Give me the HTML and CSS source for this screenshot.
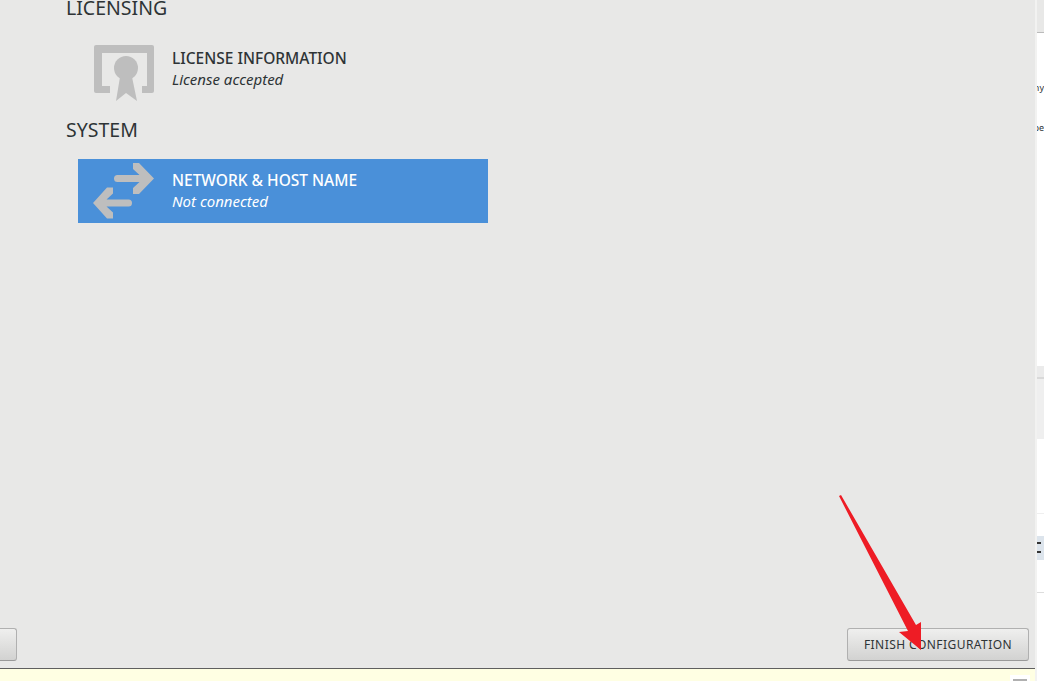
FILE: index.html
```html
<!DOCTYPE html>
<html lang="en">
<head>
  <meta charset="UTF-8">
  <title>Initial setup</title>
  <link rel="stylesheet" href="styles.css">
</head>
<body>
  <div class="screen">
    <div class="main">
      <div class="hub">
        <h2 class="category">LICENSING</h2>
        <div class="spoke">
          <svg class="spoke-icon" viewBox="0 0 66 64">
            <path d="M6 8H62a2 2 0 0 1 2 2V54a2 2 0 0 1-2 2H52V49H57V16H12V49H20V56H6a2 2 0 0 1-2-2V10a2 2 0 0 1 2-2z"/>
            <circle cx="36" cy="31" r="12"/>
            <polygon points="30,40 42,40 47,64 36,56 26,64"/>
          </svg>
          <div>
            <div class="spoke-title">LICENSE INFORMATION</div>
            <div class="spoke-status">License accepted</div>
          </div>
        </div>
        <h2 class="category">SYSTEM</h2>
        <div class="spoke selected">
          <svg class="spoke-icon" viewBox="0 0 66 64">
            <path d="M43 4h6L64 19.5 49 35H43V29L49.5 23H27.5a3.5 3.5 0 0 1 0-7H49.5L43 10z"/>
            <path d="M23 28.5H17L3 44 17 59.5H23V53.5L16.5 47.5H38.5a3.5 3.5 0 0 0 0-7H16.5L23 34.5z"/>
          </svg>
          <div>
            <div class="spoke-title">NETWORK &amp; HOST NAME</div>
            <div class="spoke-status">Not connected</div>
          </div>
        </div>
        <div class="actions">
          <button class="btn btn-cut"></button>
          <button class="btn">FINISH CONFIGURATION</button>
        </div>
      </div>
      <div class="notice"><span class="notice-box"><span class="notice-mark"></span></span></div>
    </div>
    <div class="side">
      <div class="side-head"></div>
      <div class="side-word word-any">any</div>
      <div class="side-word word-type">type</div>
      <div class="side-band"></div>
      <div class="side-rule"></div>
      <div class="side-code"><span></span><span></span></div>
      <div class="side-rule rule-last"></div>
    </div>
  </div>

  <svg class="arrow" viewBox="0 0 1044 681">
    <polygon points="839,496 841,495 916,625 921,622 921,650 899,632 908,631"/>
  </svg>
</body>
</html>
```

FILE: styles.css
```css
* {
  box-sizing: border-box;
}
html, body {
  margin: 0;
  height: 100%;
}
body {
  position: relative;
  width: 1044px;
  height: 681px;
  overflow: hidden;
  background: #fff;
  font-family: "Noto Sans", sans-serif;
  color: #2e3436;
}
.screen {
  display: flex;
  height: 681px;
}
.main {
  width: 1035px;
  display: flex;
  flex-direction: column;
}
.hub {
  flex: 1;
  display: flex;
  flex-direction: column;
  background: #e8e8e7;
  border-bottom: 1px solid #5f5f5f;
  margin-top: -2px;
}
.category {
  margin: 0 0 19px 66px;
  height: 20px;
  line-height: 20px;
  font-size: 19.5px;
  font-weight: 400;
}
.spoke {
  display: flex;
  align-items: center;
  gap: 16px;
  width: 410px;
  height: 64px;
  margin: 0 0 19px 78px;
  padding-left: 12px;
}
.spoke-icon {
  width: 66px;
  height: 64px;
  fill: #bebebe;
  flex: none;
}
.spoke-title {
  font-size: 15.5px;
  line-height: 21px;
  font-weight: 500;
}
.spoke-status {
  font-size: 15px;
  line-height: 21px;
  font-style: italic;
}
.selected {
  background: #4a90d9;
  color: #fff;
}
.actions {
  margin-top: auto;
  display: flex;
  justify-content: space-between;
  padding-right: 6px;
  margin-bottom: 7px;
}
.btn {
  height: 33px;
  width: 182px;
  padding: 0;
  border: 1px solid #b0b0b0;
  border-bottom-color: #999;
  border-radius: 3px;
  background: linear-gradient(#efefee, #d2d2d1);
  font-family: "Noto Sans", sans-serif;
  font-size: 12px;
  letter-spacing: 0.45px;
  color: #2e3436;
}
.btn-cut {
  width: 27px;
  margin-left: -10px;
}
.notice {
  height: 12px;
  background: #ffffe3;
  display: flex;
  justify-content: flex-end;
  padding-right: 5px;
  padding-top: 6px;
}
.notice-box {
  width: 20px;
  height: 6px;
  background: #fff;
  padding: 4px 3px 0;
}
.notice-mark {
  display: block;
  height: 2px;
  background: #b0b0b0;
}
.side {
  flex: 1;
  border-left: 2px solid #f2f2f1;
  overflow: hidden;
}
.side-head {
  height: 33px;
  background: #e8e8e7;
  border-bottom: 1px solid #bbb;
}
.side-word {
  display: flex;
  justify-content: flex-end;
  width: 7px;
  height: 12px;
  line-height: 12px;
  font-size: 9px;
  white-space: nowrap;
  overflow: hidden;
}
.word-any {
  margin-top: 49px;
}
.word-type {
  margin-top: 28px;
}
.side-band {
  height: 73px;
  margin-top: 232px;
  background: linear-gradient(#ebebeb 11px, #d9d9d9 11px, #d9d9d9 13px, #efefef 13px);
}
.side-rule {
  height: 1px;
  margin-top: 74px;
  background: #efefef;
}
.side-code {
  height: 24px;
  margin-top: 22px;
  padding-top: 6px;
  background: #dce4ec;
}
.side-code span {
  display: block;
  width: 4px;
  height: 2px;
  margin-bottom: 7px;
  background: #333;
}
.rule-last {
  margin-top: 32px;
  background: #ddd;
}
.arrow {
  position: absolute;
  left: 0;
  top: 0;
  width: 1044px;
  height: 681px;
  fill: #ee1c25;
  pointer-events: none;
}
```
